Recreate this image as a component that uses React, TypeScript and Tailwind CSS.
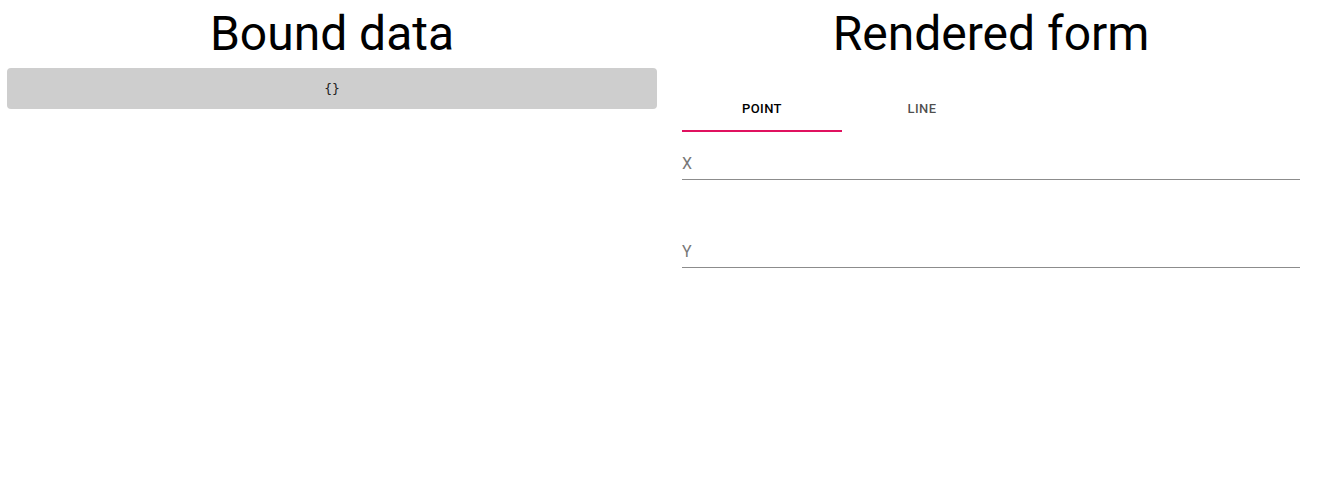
import { useState } from "react";

const TABS = ["Point", "Line"];

export default function App() {
  const [tab, setTab] = useState(0);

  return (
    <div className="flex w-full bg-white text-black" style={{ fontFamily: "Roboto, 'Liberation Sans', sans-serif" }}>
      <div className="w-[662px] shrink-0 pl-[7px] pr-[5px]">
        <h1 className="text-center text-[48px] leading-[68px] font-normal">Bound data</h1>
        <div className="h-[41px] rounded bg-[#cecece] flex items-center justify-center">
          <pre className="text-[13px] text-[#222]" style={{ fontFamily: "'DejaVu Sans Mono', 'Liberation Mono', monospace" }}>
            {"{}"}
          </pre>
        </div>
      </div>

      <div className="flex-1 pl-5 pr-[25px]">
        <h1 className="text-center text-[48px] leading-[68px] font-normal">Rendered form</h1>
        <div className="mt-4 flex">
          {TABS.map((t, i) => (
            <button
              key={t}
              onClick={() => setTab(i)}
              className={`relative w-40 h-12 pt-[2px] text-[13px] font-medium uppercase tracking-[0.4px] ${
                tab === i ? "text-black" : "text-black/70"
              }`}>
              {t}
              {tab === i && <span className="absolute left-0 right-0 bottom-0 h-[2px] bg-[#e0115f]" />}
            </button>
          ))}
        </div>

        <div className="flex flex-col">
          {["X", "Y"].map((f, i) => (
            <label key={f} className={`block ${i === 0 ? "mt-[14px]" : "mt-[54px]"}`}>
              <div className="h-[34px] border-b border-[#8c8c8c] flex items-end pb-[7px]">
                <span className="text-base text-[#777] leading-none">{f}</span>
              </div>
            </label>
          ))}
        </div>
      </div>
    </div>
  );
}
